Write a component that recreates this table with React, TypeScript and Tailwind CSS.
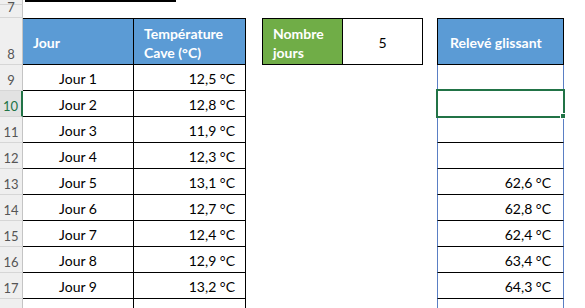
import React from 'react';

const rows = [
  { n: 9, jour: 'Jour 1', temp: '12,5 °C', releve: '' },
  { n: 10, jour: 'Jour 2', temp: '12,8 °C', releve: '' },
  { n: 11, jour: 'Jour 3', temp: '11,9 °C', releve: '' },
  { n: 12, jour: 'Jour 4', temp: '12,3 °C', releve: '' },
  { n: 13, jour: 'Jour 5', temp: '13,1 °C', releve: '62,6 °C' },
  { n: 14, jour: 'Jour 6', temp: '12,7 °C', releve: '62,8 °C' },
  { n: 15, jour: 'Jour 7', temp: '12,4 °C', releve: '62,4 °C' },
  { n: 16, jour: 'Jour 8', temp: '12,9 °C', releve: '63,4 °C' },
  { n: 17, jour: 'Jour 9', temp: '13,2 °C', releve: '64,3 °C' },
  { n: 18, jour: 'Jour 10', temp: '13,0 °C', releve: '64,2 °C' },
];

function RowHead({ n, selected }: { n: number; selected?: boolean }) {
  return (
    <div
      className={`w-[23px] shrink-0 flex items-end justify-center pb-[3px] text-[13px] leading-none border-b border-[#d6d6d6] ${
        selected
          ? 'bg-[#e2e2e2] text-[#217346] border-r-2 border-r-[#217346]'
          : 'bg-[#efefef] text-[#555] border-r border-r-[#c4c4c4]'
      }`}
    >
      {n}
    </div>
  );
}

export default function App() {
  return (
    <div
      className="relative w-[585px] h-[308px] overflow-hidden bg-white text-black text-[14px]"
      style={{ fontFamily: 'Lato, "Liberation Sans", sans-serif' }}
    >
      {/* row 6 */}
      <div className="flex h-[5px] overflow-hidden">
        <RowHead n={6} />
        <div className="ml-[2px] w-[151px] h-[2px] bg-black" />
      </div>

      {/* row 7 */}
      <div className="flex h-[13px]">
        <RowHead n={7} />
      </div>

      {/* row 8 - headers */}
      <div className="flex h-[47px]">
        <RowHead n={8} />
        <div className="w-[111px] flex items-center pl-[10px] pt-[2px] bg-[#5b9bd5] text-white font-bold border-y border-r border-black">
          Jour
        </div>
        <div className="w-[112px] flex items-center pl-[10px] pt-[2px] leading-[19px] bg-[#5b9bd5] text-white font-bold border-y border-r border-black">
          Température
          <br />
          Cave (°C)
        </div>
        <div className="w-[16px]" />
        <div className="w-[81px] flex items-center pl-[10px] pt-[2px] leading-[19px] bg-[#70ad47] text-white font-bold border border-black">
          Nombre
          <br />
          jours
        </div>
        <div className="w-[80px] flex items-center justify-center pt-[2px] border-y border-r border-black">5</div>
        <div className="w-[14px]" />
        <div className="w-[127px] flex items-center pl-[12px] pt-[2px] bg-[#5b9bd5] text-white font-bold border border-black">
          Relevé glissant
        </div>
      </div>

      {rows.map((r) => (
        <div key={r.n} className="flex h-[26px]">
          <RowHead n={r.n} selected={r.n === 10} />
          <div className="w-[111px] flex items-end justify-center pb-[1px] border-b border-r border-black">
            {r.jour}
          </div>
          <div className="w-[112px] flex items-end justify-end pr-[10px] pb-[1px] border-b border-r border-black">
            {r.temp}
          </div>
          <div className="w-[191px]" />
          <div className="w-[127px] flex items-end justify-end pr-[12px] pb-[1px] border-x border-[#5a7fc4] border-b border-b-black">
            {r.releve}
          </div>
        </div>
      ))}

      {/* active cell selection */}
      <div className="absolute left-[436px] top-[89px] w-[129px] h-[29px] border-2 border-[#217346]" />
      <div className="absolute left-[560px] top-[113px] w-[6px] h-[6px] bg-[#217346] border border-white" />
    </div>
  );
}
